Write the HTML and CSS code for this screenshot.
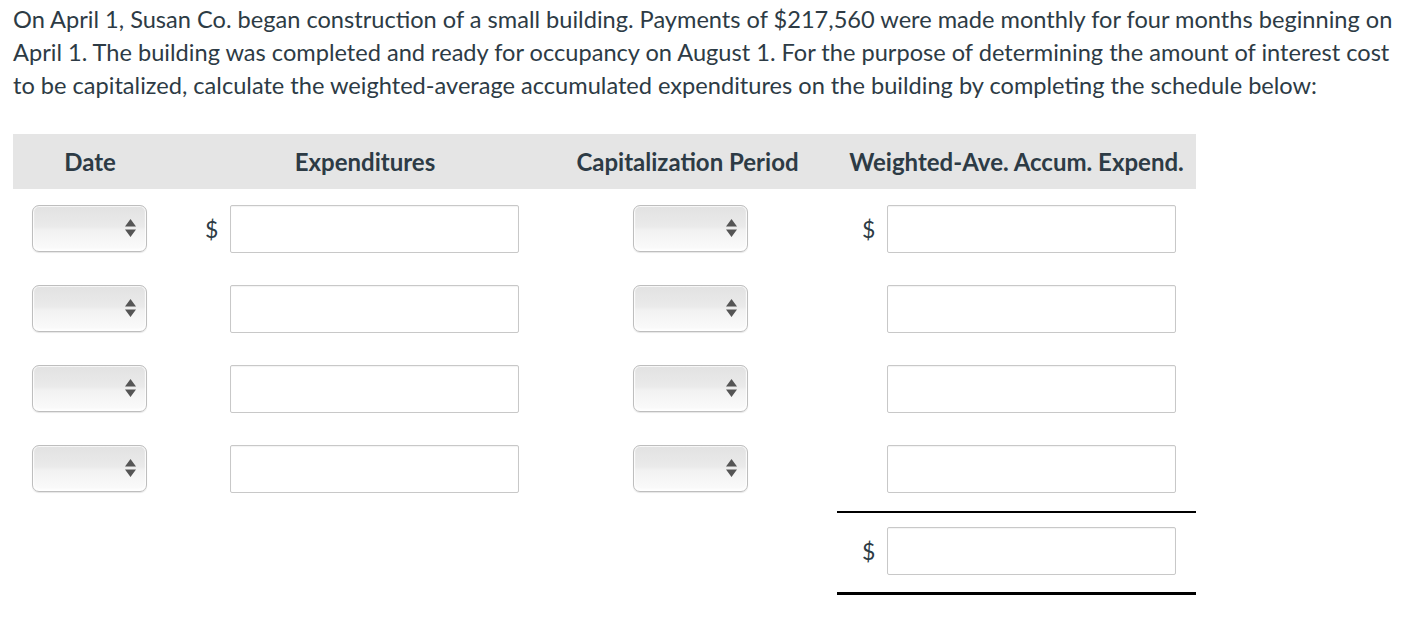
FILE: index.html
```html
<!DOCTYPE html>
<html>
<head>
<meta charset="utf-8">
<link rel="stylesheet" href="styles.css">
</head>
<body>
<p class="intro">On April 1, Susan Co. began construction of a small building. Payments of $217,560 were made monthly for four months beginning on April 1. The building was completed and ready for occupancy on August 1. For the purpose of determining the amount of interest cost to be capitalized, calculate the weighted-average accumulated expenditures on the building by completing the schedule below:</p>

<div class="schedule">
  <div class="row head">
    <div class="cell c-date">Date</div>
    <div class="cell c-exp">Expenditures</div>
    <div class="cell c-per">Capitalization Period</div>
    <div class="cell c-wav">Weighted-Ave. Accum. Expend.</div>
  </div>

  <div class="row body">
    <div class="cell c-date"><div class="sel"><svg class="arr" width="11" height="18" viewBox="0 0 11 18"><path d="M5.5 0L11 7.5H0z M0 10.5H11L5.5 18z" fill="#555"/></svg></div></div>
    <div class="cell c-exp"><span class="cur">$</span><div class="inp"></div></div>
    <div class="cell c-per"><div class="sel"><svg class="arr" width="11" height="18" viewBox="0 0 11 18"><path d="M5.5 0L11 7.5H0z M0 10.5H11L5.5 18z" fill="#555"/></svg></div></div>
    <div class="cell c-wav"><span class="cur">$</span><div class="inp"></div></div>
  </div>

  <div class="row body">
    <div class="cell c-date"><div class="sel"><svg class="arr" width="11" height="18" viewBox="0 0 11 18"><path d="M5.5 0L11 7.5H0z M0 10.5H11L5.5 18z" fill="#555"/></svg></div></div>
    <div class="cell c-exp"><span class="cur blank">$</span><div class="inp"></div></div>
    <div class="cell c-per"><div class="sel"><svg class="arr" width="11" height="18" viewBox="0 0 11 18"><path d="M5.5 0L11 7.5H0z M0 10.5H11L5.5 18z" fill="#555"/></svg></div></div>
    <div class="cell c-wav"><span class="cur blank">$</span><div class="inp"></div></div>
  </div>

  <div class="row body">
    <div class="cell c-date"><div class="sel"><svg class="arr" width="11" height="18" viewBox="0 0 11 18"><path d="M5.5 0L11 7.5H0z M0 10.5H11L5.5 18z" fill="#555"/></svg></div></div>
    <div class="cell c-exp"><span class="cur blank">$</span><div class="inp"></div></div>
    <div class="cell c-per"><div class="sel"><svg class="arr" width="11" height="18" viewBox="0 0 11 18"><path d="M5.5 0L11 7.5H0z M0 10.5H11L5.5 18z" fill="#555"/></svg></div></div>
    <div class="cell c-wav"><span class="cur blank">$</span><div class="inp"></div></div>
  </div>

  <div class="row body last">
    <div class="cell c-date"><div class="sel"><svg class="arr" width="11" height="18" viewBox="0 0 11 18"><path d="M5.5 0L11 7.5H0z M0 10.5H11L5.5 18z" fill="#555"/></svg></div></div>
    <div class="cell c-exp"><span class="cur blank">$</span><div class="inp"></div></div>
    <div class="cell c-per"><div class="sel"><svg class="arr" width="11" height="18" viewBox="0 0 11 18"><path d="M5.5 0L11 7.5H0z M0 10.5H11L5.5 18z" fill="#555"/></svg></div></div>
    <div class="cell c-wav"><span class="cur blank">$</span><div class="inp"></div></div>
  </div>

  <div class="row total">
    <div class="cell c-date"></div>
    <div class="cell c-exp"></div>
    <div class="cell c-per"></div>
    <div class="cell c-wav total-cell"><span class="cur">$</span><div class="inp"></div></div>
  </div>
</div>
</body>
</html>
```

FILE: styles.css
```css
html, body {
  margin: 0;
  padding: 0;
  background: #fff;
}

body {
  font-family: Lato, "Liberation Sans", sans-serif;
  color: #2d3b45;
}

.intro {
  margin: 3px 0 0 13px;
  width: 1396px;
  font-size: 23.6px;
  line-height: 33px;
}

.schedule {
  margin: 32px 0 0 13px;
  width: 1183px;
}

.row {
  display: grid;
  grid-template-columns: 154px 396px 274px 359px;
}

.head {
  background: #e5e5e5;
  height: 55px;
  align-items: center;
  font-weight: bold;
  font-size: 24px;
}

.head .cell {
  text-align: center;
  justify-content: center;
}

.head .c-per {
  padding-right: 25px;
}

.body {
  height: 80px;
  align-items: start;
}

.head + .body {
  margin-top: 16px;
}

.body.last {
  height: 66px;
}

.cell {
  display: flex;
  justify-content: center;
  align-items: center;
}

.body .c-date {
  justify-content: flex-start;
  padding-left: 19px;
}

.body .c-exp {
  justify-content: flex-start;
  padding-left: 38px;
}

.body .c-per {
  justify-content: flex-start;
  padding-left: 70px;
}

.body .c-wav,
.total .c-wav {
  justify-content: flex-start;
  padding-left: 25px;
}

.total {
  height: 84px;
}

.total-cell {
  border-top: 2px solid #000;
  border-bottom: 4px solid #000;
  padding-top: 14px;
  padding-bottom: 17px;
  align-items: center;
}

.cur {
  font-size: 23px;
  width: 13px;
  margin-right: 12px;
  text-align: center;
}

.cur.blank {
  visibility: hidden;
}

.inp {
  width: 287px;
  height: 46px;
  border: 1px solid #c8c8c8;
  border-radius: 2px;
  box-shadow: inset 0 1px 1px rgba(0,0,0,0.05);
  background: #fff;
}

.sel {
  position: relative;
  width: 113px;
  height: 45px;
  border: 1px solid #bebebe;
  border-radius: 7px;
  background: linear-gradient(to bottom, #e2e2e2 0%, #eaeaea 45%, #f2f2f2 55%, #fbfbfb 100%);
  box-shadow: inset 0 0 0 1px rgba(255,255,255,0.7), inset 0 -2px 3px rgba(255,255,255,0.9), 0 1px 1px rgba(0,0,0,0.1);
}

.arr {
  position: absolute;
  right: 10px;
  top: 13px;
}
```
